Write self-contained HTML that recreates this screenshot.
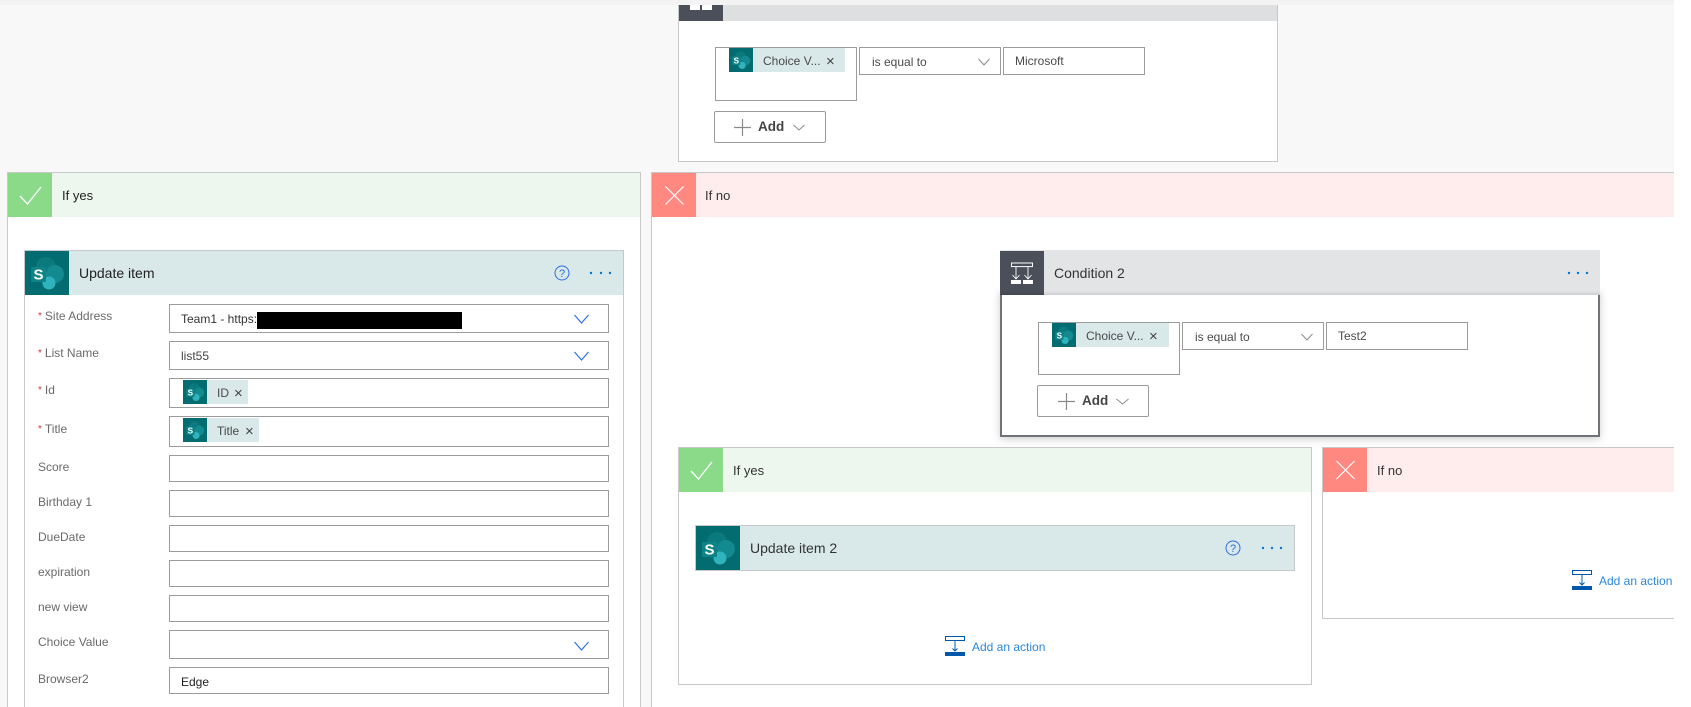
<!DOCTYPE html>
<html><head><meta charset="utf-8"><title>Flow</title>
<style>
html,body{margin:0;padding:0;background:#fff;width:1691px;height:707px;overflow:hidden}
#p{position:absolute;left:0;top:0;width:1674px;height:707px;background:#f8f8f8;overflow:hidden;font-family:"Liberation Sans",sans-serif}
#p div,#p svg{position:absolute;box-sizing:border-box}
.t{white-space:nowrap;line-height:16px;height:16px}
.f{background:#fff;border:1px solid #9b9b9b}
.lb{font-size:12px;color:#6a6a6a;left:38px}
.lb b{color:#d13438;font-weight:normal;font-size:10px;margin-right:3px;position:relative;top:-1px}
.v{font-size:12px;color:#444;left:181px}
.chip{background:#d9e8e8}
.c{font-size:12px;color:#4a4a4a}
.x{font-size:15px;color:#444}
svg{display:block}
</style></head><body><div id="p">
<div style="left:0;top:0;width:1674px;height:5px;background:#f3f3f3"></div>

<!-- top condition -->
<div style="left:678px;top:5px;width:600px;height:157px;background:#fff;border:1px solid #c8c8c8;border-top:0"></div>
<div style="left:679px;top:5px;width:598px;height:16px;background:#dedfe1"></div>
<div style="left:679px;top:5px;width:44px;height:16px;background:#4a4f5a"></div>
<div style="left:690px;top:5px;width:10px;height:5px;background:#fff"></div>
<div style="left:702px;top:5px;width:10px;height:5px;background:#fff"></div>
<div class="f" style="left:715px;top:47px;width:142px;height:54px"></div>
<div class="chip" style="left:729px;top:48px;width:116px;height:24px"></div>
<svg style="left:729px;top:48px" width="24" height="24" viewBox="0 0 44 44"><rect width="44" height="44" fill="#036c70"/><circle cx="21" cy="16" r="10" fill="#0b7a7e"/><circle cx="30" cy="23" r="9" fill="#128a8f"/><circle cx="24" cy="32" r="6.5" fill="#2fb4be"/><rect x="6" y="16" width="15" height="15" rx="1" fill="#0e8488"/><text x="13.5" y="28.5" font-size="15" font-weight="bold" fill="#fff" text-anchor="middle" font-family="Liberation Sans">S</text></svg>
<div class="t c" style="left:763px;top:53px">Choice V...</div>
<div class="t x" style="left:826px;top:54px">×</div>
<div class="f" style="left:859px;top:47px;width:142px;height:28px"></div>
<div class="t c" style="left:872px;top:54px">is equal to</div>
<svg style="left:978px;top:58px" width="12" height="8"><polyline points="0.5,1 6,7 11.5,1" fill="none" stroke="#8a8a8a"/></svg>
<div class="f" style="left:1003px;top:47px;width:142px;height:28px"></div>
<div class="t c" style="left:1015px;top:53px">Microsoft</div>
<div class="f" style="left:714px;top:111px;width:112px;height:32px;border-radius:2px"></div>
<svg style="left:734px;top:119px" width="17" height="17"><path d="M8.5 0V17M0 8.5H17" stroke="#8a8a8a" stroke-width="1.2"/></svg>
<div class="t" style="left:758px;top:119px;font-size:13.5px;font-weight:bold;color:#444">Add</div>
<svg style="left:793px;top:124px" width="12" height="7"><polyline points="0.5,1 6,6 11.5,1" fill="none" stroke="#8a8a8a"/></svg>

<!-- If yes big -->
<div style="left:7px;top:172px;width:634px;height:540px;background:#fff;border:1px solid #c8c8c8"></div>
<div style="left:8px;top:173px;width:632px;height:44px;background:#edf7ee"></div>
<div style="left:8px;top:173px;width:44px;height:44px;background:#8ada8a"></div>
<svg style="left:8px;top:173px" width="44" height="44"><polyline points="12,23 19.5,31 33,14" fill="none" stroke="#fff" stroke-width="1.3"/></svg>
<div class="t" style="left:62px;top:188px;font-size:13px;color:#222">If yes</div>

<!-- Update item -->
<div style="left:24px;top:250px;width:600px;height:470px;background:#fff;border:1px solid #c8c8c8"></div>
<div style="left:25px;top:251px;width:598px;height:44px;background:#d9e8e8"></div>
<svg style="left:25px;top:251px" width="44" height="44" viewBox="0 0 44 44"><rect width="44" height="44" fill="#036c70"/><circle cx="21" cy="16" r="10" fill="#0b7a7e"/><circle cx="30" cy="23" r="9" fill="#128a8f"/><circle cx="24" cy="32" r="6.5" fill="#2fb4be"/><rect x="6" y="16" width="15" height="15" rx="1" fill="#0e8488"/><text x="13.5" y="28.5" font-size="15" font-weight="bold" fill="#fff" text-anchor="middle" font-family="Liberation Sans">S</text></svg>
<div class="t" style="left:79px;top:265px;font-size:14px;color:#222">Update item</div>
<svg style="left:554px;top:265px" width="16" height="16"><circle cx="8" cy="8" r="7" fill="none" stroke="#2b6fe0"/><text x="8" y="12" font-size="11" fill="#2b6fe0" text-anchor="middle" font-family="Liberation Sans">?</text></svg>
<svg style="left:588px;top:270px" width="26" height="6"><circle cx="3" cy="3" r="1.2" fill="#0078d4"/><circle cx="13" cy="3" r="1.2" fill="#0078d4"/><circle cx="22" cy="3" r="1.2" fill="#0078d4"/></svg>

<div class="t lb" style="top:308px"><b>*</b>Site Address</div>
<div class="f" style="left:169px;top:304px;width:440px;height:29px"></div>
<div class="t v" style="top:311px;color:#333">Team1 - https:</div>
<div style="left:257px;top:312px;width:205px;height:17px;background:#000"></div>
<svg style="left:574px;top:314px" width="15" height="10"><polyline points="0.5,1 7.5,9 14.5,1" fill="none" stroke="#2e6fe8" stroke-width="1.2"/></svg>

<div class="t lb" style="top:345px"><b>*</b>List Name</div>
<div class="f" style="left:169px;top:341px;width:440px;height:29px"></div>
<div class="t v" style="top:348px">list55</div>
<svg style="left:574px;top:351px" width="15" height="10"><polyline points="0.5,1 7.5,9 14.5,1" fill="none" stroke="#2e6fe8" stroke-width="1.2"/></svg>

<div class="t lb" style="top:382px"><b>*</b>Id</div>
<div class="f" style="left:169px;top:378px;width:440px;height:30px"></div>
<div class="chip" style="left:183px;top:380px;width:65px;height:24px"></div>
<svg style="left:183px;top:380px" width="24" height="24" viewBox="0 0 44 44"><rect width="44" height="44" fill="#036c70"/><circle cx="21" cy="16" r="10" fill="#0b7a7e"/><circle cx="30" cy="23" r="9" fill="#128a8f"/><circle cx="24" cy="32" r="6.5" fill="#2fb4be"/><rect x="6" y="16" width="15" height="15" rx="1" fill="#0e8488"/><text x="13.5" y="28.5" font-size="15" font-weight="bold" fill="#fff" text-anchor="middle" font-family="Liberation Sans">S</text></svg>
<div class="t c" style="left:217px;top:385px">ID</div>
<div class="t x" style="left:234px;top:386px">×</div>

<div class="t lb" style="top:421px"><b>*</b>Title</div>
<div class="f" style="left:169px;top:416px;width:440px;height:31px"></div>
<div class="chip" style="left:183px;top:418px;width:76px;height:24px"></div>
<svg style="left:183px;top:418px" width="24" height="24" viewBox="0 0 44 44"><rect width="44" height="44" fill="#036c70"/><circle cx="21" cy="16" r="10" fill="#0b7a7e"/><circle cx="30" cy="23" r="9" fill="#128a8f"/><circle cx="24" cy="32" r="6.5" fill="#2fb4be"/><rect x="6" y="16" width="15" height="15" rx="1" fill="#0e8488"/><text x="13.5" y="28.5" font-size="15" font-weight="bold" fill="#fff" text-anchor="middle" font-family="Liberation Sans">S</text></svg>
<div class="t c" style="left:217px;top:423px">Title</div>
<div class="t x" style="left:245px;top:424px">×</div>

<div class="t lb" style="top:459px">Score</div>
<div class="f" style="left:169px;top:455px;width:440px;height:27px"></div>
<div class="t lb" style="top:494px">Birthday 1</div>
<div class="f" style="left:169px;top:490px;width:440px;height:27px"></div>
<div class="t lb" style="top:529px">DueDate</div>
<div class="f" style="left:169px;top:525px;width:440px;height:27px"></div>
<div class="t lb" style="top:564px">expiration</div>
<div class="f" style="left:169px;top:560px;width:440px;height:27px"></div>
<div class="t lb" style="top:599px">new view</div>
<div class="f" style="left:169px;top:595px;width:440px;height:27px"></div>
<div class="t lb" style="top:634px">Choice Value</div>
<div class="f" style="left:169px;top:630px;width:440px;height:29px"></div>
<svg style="left:574px;top:641px" width="15" height="10"><polyline points="0.5,1 7.5,9 14.5,1" fill="none" stroke="#2e6fe8" stroke-width="1.2"/></svg>
<div class="t lb" style="top:671px">Browser2</div>
<div class="f" style="left:169px;top:667px;width:440px;height:27px"></div>
<div class="t v" style="top:674px;color:#222">Edge</div>

<!-- If no big -->
<div style="left:651px;top:172px;width:1040px;height:540px;background:#fff;border:1px solid #c8c8c8"></div>
<div style="left:652px;top:173px;width:1022px;height:44px;background:#ffecec"></div>
<div style="left:652px;top:173px;width:44px;height:44px;background:#ff8880"></div>
<svg style="left:652px;top:173px" width="44" height="44"><path d="M13.5 13.5L31.5 31.5M31.5 13.5L13.5 31.5" stroke="#fff" stroke-width="1.2"/></svg>
<div class="t" style="left:705px;top:188px;font-size:13px;color:#333">If no</div>

<!-- Condition 2 -->
<div style="left:1000px;top:290px;width:600px;height:147px;background:#fff;border:2px solid #6f7378;box-shadow:0 2px 8px rgba(0,0,0,.2)"></div>
<div style="left:1000px;top:250px;width:600px;height:45px;background:#e3e4e6"></div>
<div style="left:1000px;top:251px;width:44px;height:44px;background:#4a4f5a"></div>
<div style="left:1000px;top:291px;width:600px;height:4px;background:linear-gradient(rgba(0,0,0,0),rgba(0,0,0,.1))"></div>
<svg style="left:1000px;top:251px" width="44" height="44"><rect x="11.5" y="12" width="21" height="3.6" fill="none" stroke="#fff"/><path d="M16 16V28M28 16V28M12.5 24L16 28L19.5 24M24.5 24L28 28L31.5 24" fill="none" stroke="#fff" stroke-width="0.9"/><rect x="11" y="29" width="10" height="4" fill="#fff"/><rect x="23" y="29" width="10" height="4" fill="#fff"/></svg>
<div class="t" style="left:1054px;top:265px;font-size:14px;color:#333">Condition 2</div>
<svg style="left:1566px;top:270px" width="26" height="6"><circle cx="3" cy="3" r="1.2" fill="#0078d4"/><circle cx="12" cy="3" r="1.2" fill="#0078d4"/><circle cx="21" cy="3" r="1.2" fill="#0078d4"/></svg>
<div class="f" style="left:1038px;top:322px;width:142px;height:53px"></div>
<div class="chip" style="left:1052px;top:323px;width:117px;height:24px"></div>
<svg style="left:1052px;top:323px" width="24" height="24" viewBox="0 0 44 44"><rect width="44" height="44" fill="#036c70"/><circle cx="21" cy="16" r="10" fill="#0b7a7e"/><circle cx="30" cy="23" r="9" fill="#128a8f"/><circle cx="24" cy="32" r="6.5" fill="#2fb4be"/><rect x="6" y="16" width="15" height="15" rx="1" fill="#0e8488"/><text x="13.5" y="28.5" font-size="15" font-weight="bold" fill="#fff" text-anchor="middle" font-family="Liberation Sans">S</text></svg>
<div class="t c" style="left:1086px;top:328px">Choice V...</div>
<div class="t x" style="left:1149px;top:329px">×</div>
<div class="f" style="left:1182px;top:322px;width:142px;height:28px"></div>
<div class="t c" style="left:1195px;top:329px">is equal to</div>
<svg style="left:1301px;top:333px" width="12" height="8"><polyline points="0.5,1 6,7 11.5,1" fill="none" stroke="#8a8a8a"/></svg>
<div class="f" style="left:1326px;top:322px;width:142px;height:28px"></div>
<div class="t c" style="left:1338px;top:328px">Test2</div>
<div class="f" style="left:1037px;top:385px;width:112px;height:32px;border-radius:2px"></div>
<svg style="left:1058px;top:393px" width="17" height="17"><path d="M8.5 0V17M0 8.5H17" stroke="#8a8a8a" stroke-width="1.2"/></svg>
<div class="t" style="left:1082px;top:393px;font-size:13.5px;font-weight:bold;color:#444">Add</div>
<svg style="left:1116px;top:398px" width="13" height="7"><polyline points="0.5,1 6.5,6 12.5,1" fill="none" stroke="#8a8a8a"/></svg>

<!-- Nested If yes -->
<div style="left:678px;top:447px;width:634px;height:238px;background:#fff;border:1px solid #c8c8c8"></div>
<div style="left:679px;top:448px;width:632px;height:44px;background:#edf7ee"></div>
<div style="left:679px;top:448px;width:44px;height:44px;background:#8ada8a"></div>
<svg style="left:679px;top:448px" width="44" height="44"><polyline points="12,23 19.5,31 33,14" fill="none" stroke="#fff" stroke-width="1.3"/></svg>
<div class="t" style="left:733px;top:463px;font-size:13px;color:#333">If yes</div>
<div style="left:695px;top:525px;width:600px;height:46px;background:#d9e8e8;border:1px solid #c8c8c8"></div>
<svg style="left:696px;top:526px" width="44" height="44" viewBox="0 0 44 44"><rect width="44" height="44" fill="#036c70"/><circle cx="21" cy="16" r="10" fill="#0b7a7e"/><circle cx="30" cy="23" r="9" fill="#128a8f"/><circle cx="24" cy="32" r="6.5" fill="#2fb4be"/><rect x="6" y="16" width="15" height="15" rx="1" fill="#0e8488"/><text x="13.5" y="28.5" font-size="15" font-weight="bold" fill="#fff" text-anchor="middle" font-family="Liberation Sans">S</text></svg>
<div class="t" style="left:750px;top:540px;font-size:14px;color:#333">Update item 2</div>
<svg style="left:1225px;top:540px" width="16" height="16"><circle cx="8" cy="8" r="7" fill="none" stroke="#2b6fe0"/><text x="8" y="12" font-size="11" fill="#2b6fe0" text-anchor="middle" font-family="Liberation Sans">?</text></svg>
<svg style="left:1260px;top:545px" width="26" height="6"><circle cx="3" cy="3" r="1.2" fill="#0078d4"/><circle cx="12" cy="3" r="1.2" fill="#0078d4"/><circle cx="21" cy="3" r="1.2" fill="#0078d4"/></svg>
<svg style="left:945px;top:636px" width="20" height="20"><rect x="0.5" y="0.5" width="19" height="4" fill="none" stroke="#0058ad"/><path d="M10 5V15M7.5 12.5L10 15L12.5 12.5" fill="none" stroke="#0058ad"/><rect y="16" width="20" height="4" fill="#0058ad"/></svg>
<div class="t" style="left:972px;top:639px;font-size:12px;color:#2b88d8">Add an action</div>

<!-- Nested If no -->
<div style="left:1322px;top:447px;width:400px;height:172px;background:#fff;border:1px solid #c8c8c8"></div>
<div style="left:1323px;top:448px;width:351px;height:44px;background:#ffecec"></div>
<div style="left:1323px;top:448px;width:44px;height:44px;background:#ff8880"></div>
<svg style="left:1323px;top:448px" width="44" height="44"><path d="M13.5 13L31.5 31M31.5 13L13.5 31" stroke="#fff" stroke-width="1.2"/></svg>
<div class="t" style="left:1377px;top:463px;font-size:13px;color:#333">If no</div>
<svg style="left:1572px;top:570px" width="20" height="20"><rect x="0.5" y="0.5" width="19" height="4" fill="none" stroke="#0058ad"/><path d="M10 5V15M7.5 12.5L10 15L12.5 12.5" fill="none" stroke="#0058ad"/><rect y="16" width="20" height="4" fill="#0058ad"/></svg>
<div class="t" style="left:1599px;top:573px;font-size:12px;color:#2b88d8">Add an action</div>
</div></body></html>
